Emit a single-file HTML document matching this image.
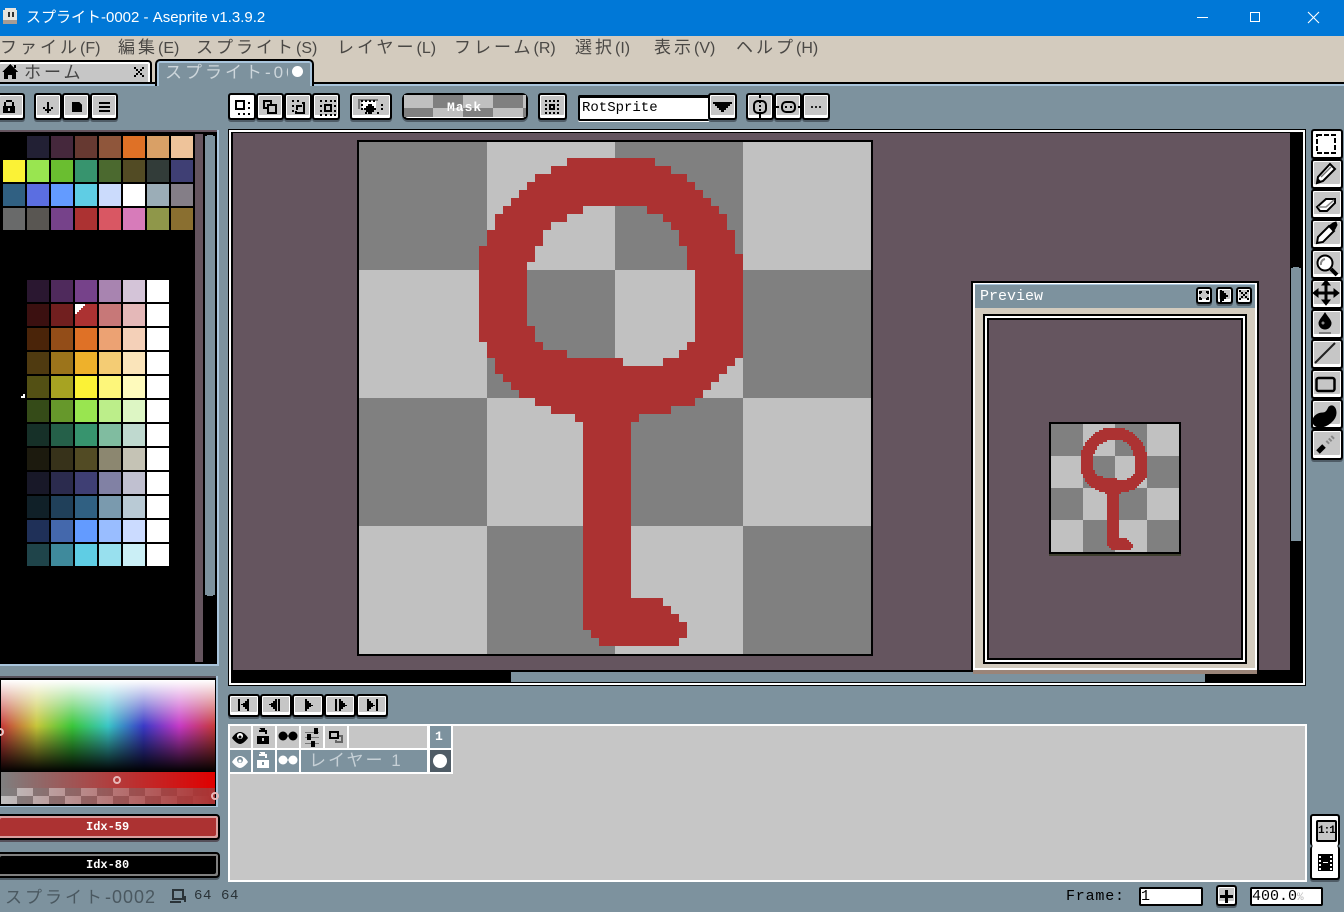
<!DOCTYPE html>
<html><head><meta charset="utf-8"><style>
html,body{margin:0;padding:0;background:#7d929e}
#r{position:relative;width:1344px;height:912px;overflow:hidden;background:#7d929e;font-family:"Liberation Sans","Noto Sans CJK JP",sans-serif}
#r div,#r svg,#r span.t{position:absolute}
.t{white-space:nowrap;line-height:1}
.b{box-sizing:border-box;border:2px solid #000;border-radius:3px;background:#c6c6c6;box-shadow:inset 1px 1px 0 #fff,inset -1px -3px 0 #fff,0 2px 0 #4f5c66}
.s{background:#fff}
.m{font-size:17px;letter-spacing:3px;color:#4a4845;top:39px}
.m i{font-style:normal;letter-spacing:0;font-size:16px}
.e{box-sizing:border-box;border:2px solid #000;background:#fff;border-radius:2px}
.mono{font-family:"Liberation Mono",monospace}
.tl{background:#c6c6c6}
.tb{background:#7d929e}
</style></head><body><div id="r">
<!-- title -->
<div style="left:0;top:0;width:1344px;height:36px;background:#0078d7"></div>
<span class="t" style="left:26px;top:10px;font-size:15px;color:#fff">スプライト-0002 - Aseprite v1.3.9.2</span>
<!-- menu -->
<div style="left:0;top:36px;width:1344px;height:46px;background:#d3cbbe"></div>
<span class="t m" style="left:0">ファイル<i>(F)</i></span>
<span class="t m" style="left:118px">編集<i>(E)</i></span>
<span class="t m" style="left:196px">スプライト<i>(S)</i></span>
<span class="t m" style="left:337px">レイヤー<i>(L)</i></span>
<span class="t m" style="left:454px">フレーム<i>(R)</i></span>
<span class="t m" style="left:575px">選択<i>(I)</i></span>
<span class="t m" style="left:654px">表示<i>(V)</i></span>
<span class="t m" style="left:736px">ヘルプ<i>(H)</i></span>
<div style="left:0;top:82px;width:1344px;height:2px;background:#000"></div>
<div style="left:0;top:84px;width:1344px;height:2px;background:#a9c5dc"></div>
<!-- tabs -->
<div style="left:-3px;top:60px;width:155px;height:24px;box-sizing:border-box;border:2px solid #000;border-radius:4px 4px 0 0;background:#c6c6c6;box-shadow:inset 0 2px 0 #fff,inset -2px 0 0 #fff"></div>
<span class="t" style="left:24px;top:64px;font-size:17px;letter-spacing:3px;color:#444">ホーム</span>
<div style="left:155px;top:59px;width:159px;height:27px;box-sizing:border-box;border:2px solid #000;border-bottom:0;border-radius:5px 5px 0 0;background:#7d929e;box-shadow:inset 0 2px 0 #a9c5dc,inset 2px 0 0 #a9c5dc,inset -2px 0 0 #a9c5dc"></div>
<div style="left:165px;top:61px;width:123px;height:22px;overflow:hidden"><span class="t" style="left:0;top:3px;font-size:17px;letter-spacing:3px;color:#cdd6db">スプライト-0002</span></div>
<div style="left:292px;top:66px;width:11px;height:11px;border-radius:50%;background:#fff"></div>
<!-- toolbar buttons -->
<div class="b" style="left:-3px;top:93px;width:28px;height:27px"></div>
<div class="b" style="left:34px;top:93px;width:28px;height:27px"></div>
<div class="b" style="left:62px;top:93px;width:28px;height:27px"></div>
<div class="b" style="left:90px;top:93px;width:28px;height:27px"></div>
<div class="b s" style="left:228px;top:93px;width:28px;height:27px"></div>
<div class="b" style="left:256px;top:93px;width:28px;height:27px"></div>
<div class="b" style="left:284px;top:93px;width:28px;height:27px"></div>
<div class="b" style="left:312px;top:93px;width:28px;height:27px"></div>
<div class="b" style="left:350px;top:93px;width:42px;height:27px"></div>
<div class="b" style="left:402px;top:93px;width:126px;height:27px;border-radius:6px;overflow:hidden;background:#c0c0c0"></div>
<div style="left:404px;top:95px;width:122px;height:13px;background:linear-gradient(90deg,#c0c0c0 0 29px,#808080 29px 59px,#c0c0c0 59px 89px,#808080 89px 119px,#c0c0c0 119px)"></div>
<div style="left:404px;top:108px;width:122px;height:9px;background:linear-gradient(90deg,#808080 0 29px,#c0c0c0 29px 59px,#808080 59px 89px,#c0c0c0 89px 119px,#808080 119px)"></div>
<span class="t mono" style="left:447px;top:101px;font-size:13px;font-weight:bold;letter-spacing:1px;color:#fff">Mask</span>
<div class="b" style="left:538px;top:93px;width:29px;height:27px"></div>
<div class="e" style="left:578px;top:95px;width:132px;height:26px;border-top:3px solid #000;box-shadow:0 1px 0 #fff"></div>
<span class="t mono" style="left:582px;top:101px;font-size:14px;color:#000">RotSprite</span>
<div class="b" style="left:708px;top:93px;width:29px;height:27px"></div>
<div class="b" style="left:746px;top:93px;width:28px;height:27px"></div>
<div class="b" style="left:774px;top:93px;width:28px;height:27px"></div>
<div class="b" style="left:802px;top:93px;width:28px;height:27px"></div>
<!-- left palette -->
<div style="left:0;top:130px;width:217px;height:534px;background:#000;border-top:2px solid #65555f;box-sizing:border-box"></div>
<div style="left:217px;top:130px;width:2px;height:535px;background:#a9c5dc"></div>
<div style="left:0;top:664px;width:219px;height:2px;background:#a9c5dc"></div>
<div style="left:195px;top:134px;width:8px;height:528px;background:#65555f"></div>
<div style="left:205px;top:136px;width:10px;height:459px;background:#7d929e"></div>
<svg style="left:0;top:0" width="1344" height="912" viewBox="0 0 1344 912" shape-rendering="crispEdges">
<g id="p1">
<rect x="27" y="136" width="22" height="22" fill="#222034"/><rect x="51" y="136" width="22" height="22" fill="#45283c"/><rect x="75" y="136" width="22" height="22" fill="#663931"/><rect x="99" y="136" width="22" height="22" fill="#8f563b"/><rect x="123" y="136" width="22" height="22" fill="#df7126"/><rect x="147" y="136" width="22" height="22" fill="#d9a066"/><rect x="171" y="136" width="22" height="22" fill="#eec39a"/>
<rect x="3" y="160" width="22" height="22" fill="#fbf236"/><rect x="27" y="160" width="22" height="22" fill="#99e550"/><rect x="51" y="160" width="22" height="22" fill="#6abe30"/><rect x="75" y="160" width="22" height="22" fill="#37946e"/><rect x="99" y="160" width="22" height="22" fill="#4b692f"/><rect x="123" y="160" width="22" height="22" fill="#524b24"/><rect x="147" y="160" width="22" height="22" fill="#323c39"/><rect x="171" y="160" width="22" height="22" fill="#3f3f74"/>
<rect x="3" y="184" width="22" height="22" fill="#306082"/><rect x="27" y="184" width="22" height="22" fill="#5b6ee1"/><rect x="51" y="184" width="22" height="22" fill="#639bff"/><rect x="75" y="184" width="22" height="22" fill="#5fcde4"/><rect x="99" y="184" width="22" height="22" fill="#cbdbfc"/><rect x="123" y="184" width="22" height="22" fill="#ffffff"/><rect x="147" y="184" width="22" height="22" fill="#9badb7"/><rect x="171" y="184" width="22" height="22" fill="#847e87"/>
<rect x="3" y="208" width="22" height="22" fill="#696a6a"/><rect x="27" y="208" width="22" height="22" fill="#595652"/><rect x="51" y="208" width="22" height="22" fill="#76428a"/><rect x="75" y="208" width="22" height="22" fill="#ac3232"/><rect x="99" y="208" width="22" height="22" fill="#d95763"/><rect x="123" y="208" width="22" height="22" fill="#d77bba"/><rect x="147" y="208" width="22" height="22" fill="#8f974a"/><rect x="171" y="208" width="22" height="22" fill="#8a6f30"/>
</g>
<g>
<rect x="27" y="280" width="22" height="22" fill="#2a1730"/><rect x="51" y="280" width="22" height="22" fill="#4f2a5c"/><rect x="75" y="280" width="22" height="22" fill="#76428a"/><rect x="99" y="280" width="22" height="22" fill="#a884b0"/><rect x="123" y="280" width="22" height="22" fill="#d4c4d8"/>
<rect x="27" y="304" width="22" height="22" fill="#3b1010"/><rect x="51" y="304" width="22" height="22" fill="#711f1f"/><rect x="75" y="304" width="22" height="22" fill="#ac3232"/><rect x="99" y="304" width="22" height="22" fill="#c77878"/><rect x="123" y="304" width="22" height="22" fill="#e4b8b8"/>
<rect x="27" y="328" width="22" height="22" fill="#4a2409"/><rect x="51" y="328" width="22" height="22" fill="#934d18"/><rect x="75" y="328" width="22" height="22" fill="#df7126"/><rect x="99" y="328" width="22" height="22" fill="#eca273"/><rect x="123" y="328" width="22" height="22" fill="#f4d0b8"/>
<rect x="27" y="352" width="22" height="22" fill="#4f3a10"/><rect x="51" y="352" width="22" height="22" fill="#9c741b"/><rect x="75" y="352" width="22" height="22" fill="#eeb12b"/><rect x="99" y="352" width="22" height="22" fill="#f4cc74"/><rect x="123" y="352" width="22" height="22" fill="#fae4ba"/>
<rect x="27" y="376" width="22" height="22" fill="#535014"/><rect x="51" y="376" width="22" height="22" fill="#a7a322"/><rect x="75" y="376" width="22" height="22" fill="#fbf236"/><rect x="99" y="376" width="22" height="22" fill="#fdf67a"/><rect x="123" y="376" width="22" height="22" fill="#fefabc"/>
<rect x="27" y="400" width="22" height="22" fill="#354b18"/><rect x="51" y="400" width="22" height="22" fill="#66982b"/><rect x="75" y="400" width="22" height="22" fill="#99e550"/><rect x="99" y="400" width="22" height="22" fill="#bcee8a"/><rect x="123" y="400" width="22" height="22" fill="#ddf6c4"/>
<rect x="27" y="424" width="22" height="22" fill="#163028"/><rect x="51" y="424" width="22" height="22" fill="#256049"/><rect x="75" y="424" width="22" height="22" fill="#37946e"/><rect x="99" y="424" width="22" height="22" fill="#80bca0"/><rect x="123" y="424" width="22" height="22" fill="#bfd9cf"/>
<rect x="27" y="448" width="22" height="22" fill="#1c1a0e"/><rect x="51" y="448" width="22" height="22" fill="#37321a"/><rect x="75" y="448" width="22" height="22" fill="#524b24"/><rect x="99" y="448" width="22" height="22" fill="#8c8770"/><rect x="123" y="448" width="22" height="22" fill="#c5c3b5"/>
<rect x="27" y="472" width="22" height="22" fill="#181828"/><rect x="51" y="472" width="22" height="22" fill="#2b2b4e"/><rect x="75" y="472" width="22" height="22" fill="#3f3f74"/><rect x="99" y="472" width="22" height="22" fill="#8181a4"/><rect x="123" y="472" width="22" height="22" fill="#c0c0d0"/>
<rect x="27" y="496" width="22" height="22" fill="#102028"/><rect x="51" y="496" width="22" height="22" fill="#20405a"/><rect x="75" y="496" width="22" height="22" fill="#306082"/><rect x="99" y="496" width="22" height="22" fill="#7a9aae"/><rect x="123" y="496" width="22" height="22" fill="#b9cad5"/>
<rect x="27" y="520" width="22" height="22" fill="#1f3058"/><rect x="51" y="520" width="22" height="22" fill="#4468ac"/><rect x="75" y="520" width="22" height="22" fill="#639bff"/><rect x="99" y="520" width="22" height="22" fill="#99bdff"/><rect x="123" y="520" width="22" height="22" fill="#cbdbff"/>
<rect x="27" y="544" width="22" height="22" fill="#1f444a"/><rect x="51" y="544" width="22" height="22" fill="#3f8a9c"/><rect x="75" y="544" width="22" height="22" fill="#5fcde4"/><rect x="99" y="544" width="22" height="22" fill="#98e0ee"/><rect x="123" y="544" width="22" height="22" fill="#cbeff6"/>
<rect x="147" y="280" width="22" height="286" fill="#fff"/>
<path d="M147 302h22v2h-22zM147 326h22v2h-22zM147 350h22v2h-22zM147 374h22v2h-22zM147 398h22v2h-22zM147 422h22v2h-22zM147 446h22v2h-22zM147 470h22v2h-22zM147 494h22v2h-22zM147 518h22v2h-22zM147 542h22v2h-22z" fill="#000"/>
<path d="M75 304h10v2h-2v2h-2v2h-2v2h-2v2h-2z" fill="#fff"/>
<path d="M23 394h2v4h-4v-2h2z" fill="#fff"/>
</g>
</svg>
<!-- color selector -->
<div style="left:0;top:676px;width:216px;height:130px;background:#000;border-top:2px solid #55505a;box-sizing:border-box"></div>
<div style="left:216px;top:676px;width:2px;height:131px;background:#a9c5dc"></div>
<div style="left:0;top:806px;width:218px;height:1px;background:#a9c5dc"></div>
<div style="left:1px;top:680px;width:214px;height:92px;background:linear-gradient(to bottom,#fff 0,rgba(255,255,255,0) 50%,rgba(0,0,0,0) 50%,#000 100%),linear-gradient(to right,hsl(0,55%,50%),hsl(60,55%,50%) 16.67%,hsl(120,55%,50%) 33.33%,hsl(180,55%,50%) 50%,hsl(240,55%,50%) 66.67%,hsl(300,55%,50%) 83.33%,hsl(360,55%,50%))"></div>
<div style="left:1px;top:772px;width:214px;height:16px;background:linear-gradient(to right,#7f7f7f,#e00000)"></div>
<div style="left:1px;top:788px;width:214px;height:16px;background:linear-gradient(to right,rgba(172,50,50,0),#ac3232),repeating-conic-gradient(#c0c0c0 0 25%,#808080 0 50%) 0 0/32px 16px"></div>
<div style="left:-4px;top:728px;width:8px;height:8px;box-sizing:border-box;border:2px solid #e8c8c8;border-radius:50%"></div>
<div style="left:113px;top:776px;width:8px;height:8px;box-sizing:border-box;border:2px solid #e8b8b8;border-radius:50%"></div>
<div style="left:211px;top:792px;width:8px;height:8px;box-sizing:border-box;border:2px solid #e8b8b8;border-radius:50%"></div>
<!-- fg/bg -->
<div style="left:-4px;top:814px;width:224px;height:26px;box-sizing:border-box;border:2px solid #000;border-radius:4px;background:#ac3232;box-shadow:inset 2px 2px 0 #d9a0a0,inset -2px -2px 0 #d9a0a0,0 2px 0 #55505a"></div>
<span class="t mono" style="left:86px;top:821px;font-size:12px;font-weight:bold;color:#fff">Idx-59</span>
<div style="left:-4px;top:852px;width:224px;height:26px;box-sizing:border-box;border:2px solid #000;border-radius:4px;background:#000;box-shadow:inset 2px 2px 0 #808080,inset -2px -2px 0 #808080,0 2px 0 #4f5c66"></div>
<span class="t mono" style="left:86px;top:859px;font-size:12px;font-weight:bold;color:#fff">Idx-80</span>
<!-- editor -->
<div style="left:228px;top:129px;width:1078px;height:557px;box-sizing:border-box;background:#000;border:1px solid #000"></div>
<div style="left:229px;top:130px;width:1076px;height:555px;box-sizing:border-box;border:2px solid #fff;background:#000"></div>
<div style="left:233px;top:133px;width:1057px;height:537px;background:#65555f"></div>
<div style="left:1291px;top:268px;width:10px;height:273px;background:#7d929e"></div>
<div style="left:511px;top:672px;width:694px;height:10px;background:#7d929e"></div>
<!-- sprite -->
<div style="left:357px;top:140px;width:516px;height:516px;background:#000"></div>
<svg style="left:359px;top:142px" width="512" height="512" viewBox="0 0 64 64" shape-rendering="crispEdges">
<symbol id="sp" viewBox="0 0 64 64">
<rect width="64" height="64" fill="#c1c1c1"/>
<path d="M0 0h16v16H0zM32 0h16v16H32zM16 16h16v16H16zM48 16h16v16H48zM0 32h16v16H0zM32 32h16v16H32zM16 48h16v16H16zM48 48h16v16H48z" fill="#808080"/>
<path fill="#ac3232" d="M26 2h11v1H26zM24 3h15v1H24zM22 4h19v1H22zM21 5h21v1H21zM20 6h23v1H20zM19 7h25v1H19zM18 8h10v1H18zM36 8h9v1H36zM17 9h9v1H17zM38 9h8v1H38zM17 10h7v1H17zM39 10h7v1H39zM16 11h7v2H16zM40 11h7v2H40zM15 13h7v1H15zM41 13h6v1H41zM15 14h7v1H15zM41 14h7v1H41zM15 15h6v1H15zM41 15h7v1H41zM15 16h6v7H15zM42 16h6v10H42zM15 23h7v2H15zM16 25h7v1H16zM41 25h1v1H41zM16 26h10v1H16zM40 26h8v1H40zM17 27h16v1H17zM38 27h9v1H38zM17 28h29v1H17zM18 29h27v1H18zM19 30h25v1H19zM20 31h23v1H20zM22 32h20v1H22zM24 33h15v1H24zM27 34h8v1H27zM28 35h6v22H28zM28 57h10v1H28zM28 58h11v1H28zM28 59h12v1H28zM28 60h13v1H28zM29 61h12v1H29zM30 62h10v1H30z"/>
</symbol>
<use href="#sp" width="64" height="64"/>
</svg>
<!-- preview window -->
<div style="left:971px;top:281px;width:288px;height:389px;background:#000"></div>
<div style="left:973px;top:283px;width:284px;height:391px;background:#9a8478"></div>
<div style="left:973px;top:283px;width:284px;height:387px;box-sizing:border-box;border:2px solid #fff;background:#d3cbbe"></div>
<div style="left:975px;top:284px;width:280px;height:24px;background:#7d929e;border-top:1px solid #a9c5dc;box-sizing:border-box"></div>
<span class="t mono" style="left:980px;top:289px;font-size:15px;color:#fff">Preview</span>
<div class="b" style="left:1196px;top:287px;width:16px;height:17px"></div>
<div class="b" style="left:1216px;top:287px;width:17px;height:17px"></div>
<div class="b" style="left:1236px;top:287px;width:16px;height:17px"></div>
<div style="left:983px;top:314px;width:264px;height:350px;box-sizing:border-box;border:2px solid #000;background:#fff"></div>
<div style="left:987px;top:318px;width:256px;height:342px;box-sizing:border-box;border:2px solid #000;background:#65555f"></div>
<div style="left:1049px;top:422px;width:132px;height:132px;background:#000;box-shadow:0 2px 0 #3f3f2f"></div>
<svg style="left:1051px;top:424px" width="128" height="128" viewBox="0 0 64 64" shape-rendering="crispEdges"><use href="#sp" width="64" height="64"/></svg>
<!-- right tools -->
<div class="b s" style="left:1311px;top:129px;width:32px;height:30px"></div>
<div class="b" style="left:1311px;top:159px;width:32px;height:30px"></div>
<div class="b" style="left:1311px;top:189px;width:32px;height:30px"></div>
<div class="b" style="left:1311px;top:219px;width:32px;height:30px"></div>
<div class="b" style="left:1311px;top:249px;width:32px;height:30px"></div>
<div class="b" style="left:1311px;top:279px;width:32px;height:30px"></div>
<div class="b" style="left:1311px;top:309px;width:32px;height:30px"></div>
<div class="b" style="left:1311px;top:339px;width:32px;height:30px"></div>
<div class="b" style="left:1311px;top:369px;width:32px;height:30px"></div>
<div class="b" style="left:1311px;top:399px;width:32px;height:30px"></div>
<div class="b" style="left:1311px;top:429px;width:32px;height:31px"></div>
<!-- anim -->
<div class="b" style="left:228px;top:694px;width:32px;height:23px"></div>
<div class="b" style="left:260px;top:694px;width:32px;height:23px"></div>
<div class="b" style="left:292px;top:694px;width:32px;height:23px"></div>
<div class="b" style="left:324px;top:694px;width:32px;height:23px"></div>
<div class="b" style="left:356px;top:694px;width:32px;height:23px"></div>
<!-- timeline -->
<div style="left:228px;top:724px;width:1079px;height:158px;background:#fff"></div>
<div style="left:230px;top:726px;width:1075px;height:154px;background:#c6c6c6"></div>
<div style="left:251px;top:726px;width:2px;height:46px;background:#fff"></div>
<div style="left:275px;top:726px;width:2px;height:46px;background:#fff"></div>
<div style="left:299px;top:726px;width:2px;height:46px;background:#fff"></div>
<div style="left:323px;top:726px;width:2px;height:24px;background:#fff"></div>
<div style="left:347px;top:726px;width:2px;height:24px;background:#fff"></div>
<div style="left:427px;top:726px;width:3px;height:46px;background:#fff"></div>
<div style="left:451px;top:726px;width:2px;height:46px;background:#fff"></div>
<div style="left:230px;top:748px;width:223px;height:2px;background:#fff"></div>
<div style="left:230px;top:772px;width:223px;height:2px;background:#fff"></div>
<div class="tb" style="left:430px;top:726px;width:21px;height:22px"></div>
<span class="t mono" style="left:435px;top:730px;font-size:13px;font-weight:bold;color:#fff">1</span>
<div class="tb" style="left:230px;top:750px;width:21px;height:22px"></div>
<div class="tb" style="left:253px;top:750px;width:22px;height:22px"></div>
<div class="tb" style="left:277px;top:750px;width:22px;height:22px"></div>
<div class="tb" style="left:301px;top:750px;width:126px;height:22px"></div>
<span class="t" style="left:309px;top:752px;font-size:17px;letter-spacing:2px;color:#c6d0d6">レイヤー 1</span>
<div style="left:430px;top:750px;width:21px;height:22px;background:#4f5c66"></div>
<div style="left:433px;top:754px;width:14px;height:14px;border-radius:50%;background:#fff"></div>
<!-- bottom right -->
<div class="b s" style="left:1310px;top:814px;width:30px;height:32px;box-shadow:none;border-bottom:0"></div>
<div class="b s" style="left:1310px;top:846px;width:30px;height:34px;border-top:0"></div>
<div style="left:1316px;top:820px;width:21px;height:22px;box-sizing:border-box;border:2px solid #000;border-radius:2px;background:#c6c6c6"></div>
<span class="t mono" style="left:1318px;top:826px;font-size:11px;font-weight:bold;letter-spacing:-1px;color:#000">1:1</span>
<!-- status -->
<span class="t" style="left:5px;top:888px;font-size:17px;letter-spacing:3px;color:#4a5860">スプライト<span style="letter-spacing:1px;font-size:18px">-0002</span></span>
<span class="t mono" style="left:194px;top:889px;font-size:14px;color:#2a3338;letter-spacing:.6px">64 64</span>
<span class="t mono" style="left:1066px;top:889px;font-size:15px;letter-spacing:.8px;color:#000">Frame:</span>
<div class="e" style="left:1139px;top:887px;width:64px;height:19px"></div>
<span class="t mono" style="left:1141px;top:889px;font-size:15px;color:#000">1</span>
<div class="b" style="left:1216px;top:885px;width:21px;height:21px"></div>
<div class="e" style="left:1250px;top:887px;width:73px;height:19px"></div>
<span class="t mono" style="left:1252px;top:889px;font-size:15px;color:#000">400.0<span style="color:#bbb;font-size:11px">%</span></span>
<!-- icons overlay -->
<svg style="left:0;top:0" width="1344" height="912" viewBox="0 0 1344 912" shape-rendering="crispEdges">
<!-- title logo + win controls -->
<path d="M5 8h11v2h1v12h-1v2H5v-2H3V10h2z" fill="#e8e4de"/><path d="M3 20h14v4H3z" fill="#a89c94"/><path d="M8 12h2v5H8zM12 12h2v5h-2z" fill="#333"/>
<path d="M1197 17h11v1h-11z" fill="#fff"/>
<path d="M1250 12h10v10h-10zM1251 13v8h8v-8z" fill="#fff" fill-rule="evenodd"/>
<path d="M1308 12l11 11M1319 12l-11 11" stroke="#fff" stroke-width="1.1" fill="none" shape-rendering="auto"/>
<!-- home icon / x -->
<path d="M10 64l8 8h-2v7h-4v-4H8v4H4v-7H2zM14 65h2v3h-2z" fill="#000"/>
<path d="M134 67h2v2h-2zM136 69h2v2h-2zM138 71h2v2h-2zM140 73h2v2h-2zM142 75h2v2h-2zM142 67h2v2h-2zM140 69h2v2h-2zM136 73h2v2h-2zM134 75h2v2h-2z" fill="#000"/>
<!-- lock -->
<path d="M6 100h6v2h2v4h1v7H3v-7h1v-4h2zM6 102v4h6v-4zM8 108v3h2v-3z" fill="#000" fill-rule="evenodd"/>
<path d="M47 102h2v7h2v-2h2v2h-2v2h-2v2h-2v-2h-2v-2h-2v-2h2v2h2z" fill="#000"/>
<path d="M72 102h7l3 3v7H72z" fill="#000"/>
<path d="M99 102h11v2H99zM99 106h11v2H99zM99 110h11v2H99z" fill="#000"/>
<!-- selection modes -->
<path d="M235 100h10v10h-10zM237 102v6h6v-6z" fill="#000" fill-rule="evenodd"/>
<path d="M248 102h2v2h-2zM248 107h2v2h-2zM238 113h2v2h-2zM243 113h2v2h-2zM248 113h2v2h-2z" fill="#000"/>
<path d="M263 100h9v4h5v10h-10v-5h-4zM265 102v5h2v-3h3v-2zM269 106v6h6v-6z" fill="#000" fill-rule="evenodd"/>
<path d="M292 100h2v2h-2zM297 100h2v2h-2zM292 105h2v2h-2zM292 110h2v2h-2z" fill="#000"/><path d="M302 102h3v12h-10v-3h2v1h6v-8h-1z" fill="#000"/><path d="M296 105h6v2h-4v3h-2z" fill="#000"/>
<path d="M320 100h2v2h-2zM325 100h2v2h-2zM330 100h2v2h-2zM320 105h2v2h-2zM320 110h2v2h-2zM320 114h2v2h-2zM325 114h2v2h-2zM330 114h2v2h-2zM334 100h2v2h-2zM334 105h2v2h-2zM334 110h2v2h-2zM334 114h2v2h-2z" fill="#000"/>
<path d="M324 104h8v8h-8zM326 106v4h4v-4z" fill="#000" fill-rule="evenodd"/>
<!-- mask icon -->
<path d="M358 99h20v2h-18v8h-2z" fill="#777"/><path d="M362 101h14v8h-14z" fill="#fff"/>
<path d="M361 100h2v2h-2zM365 100h2v2h-2zM369 100h2v2h-2zM373 100h2v2h-2zM361 104h2v2h-2zM361 108h2v2h-2zM381 104h2v2h-2zM381 108h2v2h-2zM365 112h2v2h-2zM377 112h2v2h-2z" fill="#000"/>
<path d="M368 104h4v2h2v2h2v2h-2v2h-2v2h-4v-2h-2v-2h-2v-2h2v-2h2z" fill="#000"/>
<!-- grid btn -->
<path d="M545 100h2v2h-2zM549 100h2v2h-2zM553 100h2v2h-2zM557 100h2v2h-2zM545 104h2v2h-2zM545 108h2v2h-2zM545 112h2v2h-2zM549 112h2v2h-2zM553 112h2v2h-2zM557 112h2v2h-2zM557 104h2v2h-2zM557 108h2v2h-2zM549 104h6v6h-6zM551 106v2h2v-2z" fill="#000" fill-rule="evenodd"/>
<!-- dropdown arrow -->
<path d="M713 102h19v2h-2v2h-2v2h-2v2h-2v2h-3v-2h-2v-2h-2v-2h-2v-2h-2z" fill="#000"/>
<!-- rot buttons -->
<g shape-rendering="auto">
<rect x="754" y="101" width="12" height="12" rx="4" fill="none" stroke="#000" stroke-width="2"/>
<rect x="782" y="102" width="13" height="10" rx="4" fill="none" stroke="#000" stroke-width="2"/>
</g>
<path d="M759 94h2v4h-2zM759 101h2v2h-2zM759 105h2v2h-2zM759 109h2v2h-2zM759 114h2v5h-2z" fill="#000"/>
<path d="M775 106h4v2h-4zM785 106h2v2h-2zM790 106h2v2h-2zM798 106h4v2h-4z" fill="#000"/>
<path d="M811 106h2v2h-2zM815 106h2v2h-2zM819 106h2v2h-2z" fill="#222"/>
<!-- preview buttons -->
<path d="M1199 291h3v2h-1v1h-2zM1206 291h3v3h-2v-1h-1zM1199 297h2v1h1v2h-3zM1207 297h2v3h-3v-2h1z" fill="#000"/>
<path d="M1220 290h2v1h2v2h2v2h2v2h-2v2h-2v2h-2v1h-2z" fill="#000"/>
<path d="M1239 290h2v2h2v2h2v-2h2v-2h2v2h-2v2h-2v2h2v2h2v2h-2v-2h-2v-2h-2v2h-2v2h-2v-2h2v-2h2v-2h-2v-2h-2z" fill="#000"/>
<!-- tools -->
<rect x="1317" y="135" width="18" height="18" fill="none" stroke="#000" stroke-width="2" stroke-dasharray="5 2"/>
<g shape-rendering="auto" fill="none" stroke="#000">
<path d="M1317 183l1-6 12-13 5 5-12 12z" stroke-width="2" fill="#fff"/><path d="M1321 177l10-10" stroke="#777" stroke-width="1.5"/><path d="M1317 183l1-4 3 3z" fill="#000"/>
<path d="M1317 207l9-8h9v4l-8 8h-7z" stroke-width="2" fill="#fff"/><path d="M1318 207h8l8-7" stroke="#888" stroke-width="1.5"/>
<path d="M1317 243l1-6 11-11 5 5-11 11z" stroke-width="2" fill="#fff"/><path d="M1329 226l4-3 3-1 1 3-2 4-2 2z" fill="#000" stroke="#000"/>
<circle cx="1325" cy="263" r="7.5" stroke-width="2" fill="#fff"/><path d="M1331 269l6 6" stroke-width="4"/><path d="M1321 265a5 5 0 0 1 4-6" stroke="#888" stroke-width="2"/>
<path d="M1326 284v18M1317 293h18" stroke-width="3"/><path d="M1326 280l-4 5h8zM1326 305l-4-5h8zM1313 293l5-4v8zM1339 293l-5-4v8z" fill="#000"/>
<path d="M1325 313c-3 5-6 7-6 10a6 6 0 0 0 12 0c0-3-3-5-6-10z" fill="#000"/><circle cx="1323" cy="323" r="1.5" fill="#888" stroke="none"/><path d="M1319 333h12" stroke="#666" stroke-width="1.5"/>
<path d="M1315 363l20-20" stroke="#222" stroke-width="2"/>
<rect x="1316.5" y="378" width="18" height="13" rx="2" stroke-width="2.5"/>
<path d="M1313 421c0-5 5-8 10-8 3 0 4-2 6-6 4-3 7 1 7 6 0 7-9 14-16 14-4 0-7-2-7-6z" fill="#000"/>
<path d="M1318 452l6-6" stroke="#000" stroke-width="5"/><path d="M1327 443l7-7" stroke="#888" stroke-width="4" stroke-dasharray="2 1.5"/>
</g>
<!-- anim icons -->
<path d="M238 699h2v12h-2zM247 699h2v12h-2v-2h-2v-2h-2v-2h-2v-1h2v-1h2v-2h2z" fill="#000"/>
<path d="M278 699h2v12h-2zM275 699h2v12h-2v-2h-2v-2h-2v-2h-2v-1h2v-1h2v-2h2z" fill="#000"/>
<path d="M305 699h2v2h2v2h2v2h2v1h-2v1h-2v2h-2v2h-2z" fill="#000"/>
<path d="M335 699h2v12h-2zM339 699h2v2h2v2h2v2h2v1h-2v1h-2v2h-2v2h-2z" fill="#000"/>
<path d="M367 699h2v2h2v2h2v2h2v1h-2v1h-2v2h-2v2h-2zM376 699h2v12h-2z" fill="#000"/>
<!-- timeline header icons -->
<g shape-rendering="auto">
<path d="M232 738c3-5 6-6 8-6s5 1 8 6c-3 4-6 6-8 6s-5-2-8-6z" fill="#000"/><circle cx="240" cy="736" r="3" fill="#fff"/><circle cx="240" cy="737" r="1.5" fill="#000"/>
<path d="M232 762c3-5 6-6 8-6s5 1 8 6c-3 4-6 6-8 6s-5-2-8-6z" fill="#fff"/><circle cx="240" cy="760" r="3" fill="#7d929e"/><circle cx="240" cy="761" r="1.5" fill="#fff"/>
<circle cx="283" cy="736" r="4.5" fill="#000"/><circle cx="293" cy="736" r="4.5" fill="#000"/><path d="M283 736h10" stroke="#000"/>
<circle cx="283" cy="760" r="4.5" fill="#fff"/><circle cx="293" cy="760" r="4.5" fill="#fff"/><path d="M283 760h10" stroke="#fff"/>
</g>
<path d="M259 728h6v2h2v4h-2v-2h-6v4h10v8h-12v-8h2v-6h2z" fill="#000"/><path d="M262 738h2v3h-2z" fill="#c6c6c6"/>
<path d="M259 752h6v2h2v4h-2v-2h-6v4h10v8h-12v-8h2v-6h2z" fill="#fff"/><path d="M262 762h2v3h-2z" fill="#7d929e"/>
<path d="M305 732h14v1h-14zM305 737h14v1h-14zM305 743h14v1h-14z" fill="#777"/><path d="M314 728h4v6h-4zM307 734h4v6h-4zM311 741h4v6h-4z" fill="#000"/>
<path d="M329 731h10v8h-10zM331 733v4h6v-4z" fill="#000" fill-rule="evenodd"/><path d="M339 735h4v8h-8v-3h2v1h4v-4h-2z" fill="#666"/>
<!-- film -->
<path d="M1318 854h15v17h-15z" fill="#000"/><path d="M1319 856h2v2h-2zM1319 860h2v2h-2zM1319 864h2v2h-2zM1319 868h2v2h-2zM1330 856h2v2h-2zM1330 860h2v2h-2zM1330 864h2v2h-2zM1330 868h2v2h-2zM1323 862h5v1h-5z" fill="#fff"/>
<!-- plus -->
<path d="M1225 890h3v5h5v3h-5v5h-3v-5h-5v-3h5z" fill="#000"/>
<!-- status icon -->
<path d="M172 889h12v11h-12zM174 891v7h8v-7z" fill="#2a3338" fill-rule="evenodd"/><path d="M170 901h11v2h-11zM184 896h2v6h-2z" fill="#2a3338"/>
<!-- scroll notches -->
<path d="M1293 267h6v1h-6zM207 135h6v1h-6zM207 595h6v1h-6z" fill="#7d929e"/>
</svg>
</div></body></html>
